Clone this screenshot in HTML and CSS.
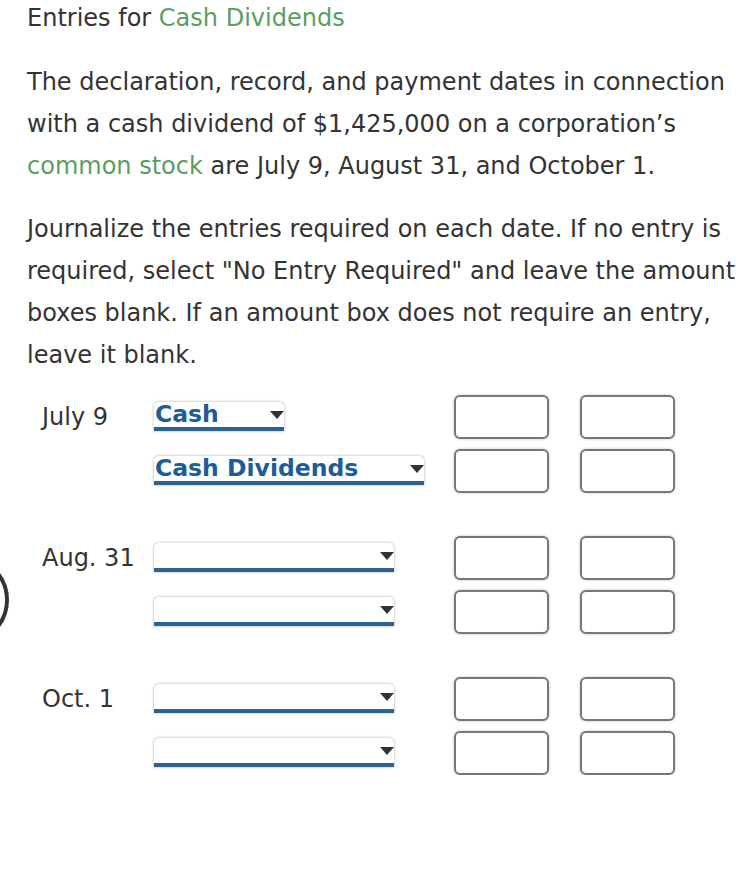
FILE: index.html
```html
<!DOCTYPE html>
<html>
<head>
<meta charset="utf-8">
<link rel="stylesheet" href="styles.css">
</head>
<body>
<div class="page">
  <div class="title">Entries for <span class="green">Cash Dividends</span></div>
  <p class="para p1">The declaration, record, and payment dates in connection with a cash dividend of $1,425,000 on a corporation’s <span class="green">common stock</span> are July 9, August 31, and October 1.</p>
  <p class="para p2">Journalize the entries required on each date. If no entry is required, select "No Entry Required" and leave the amount boxes blank. If an amount box does not require an entry, leave it blank.</p>

  <div class="journal">
    <div class="group">
      <div class="row">
        <div class="date">July 9</div>
        <div class="acct"><div class="sel w-cash"><span class="val">Cash</span><span class="arrow"></span></div></div>
        <div class="amt"></div>
        <div class="amt"></div>
      </div>
      <div class="row">
        <div class="date"></div>
        <div class="acct"><div class="sel w-div"><span class="val">Cash Dividends</span><span class="arrow"></span></div></div>
        <div class="amt"></div>
        <div class="amt"></div>
      </div>
    </div>
    <div class="group">
      <div class="row">
        <div class="date">Aug. 31</div>
        <div class="acct"><div class="sel w-empty"><span class="val"></span><span class="arrow"></span></div></div>
        <div class="amt"></div>
        <div class="amt"></div>
      </div>
      <div class="row">
        <div class="date"></div>
        <div class="acct"><div class="sel w-empty"><span class="val"></span><span class="arrow"></span></div></div>
        <div class="amt"></div>
        <div class="amt"></div>
      </div>
    </div>
    <div class="group">
      <div class="row">
        <div class="date">Oct. 1</div>
        <div class="acct"><div class="sel w-empty"><span class="val"></span><span class="arrow"></span></div></div>
        <div class="amt"></div>
        <div class="amt"></div>
      </div>
      <div class="row">
        <div class="date"></div>
        <div class="acct"><div class="sel w-empty"><span class="val"></span><span class="arrow"></span></div></div>
        <div class="amt"></div>
        <div class="amt"></div>
      </div>
    </div>
  </div>
  <div class="ring"></div>
</div>
</body>
</html>
```

FILE: styles.css
```css
html, body {
  margin: 0;
  padding: 0;
  background: #ffffff;
}
.page {
  position: relative;
  padding: 0 0 0 27px;
  font-family: "DejaVu Sans", Verdana, sans-serif;
  color: #333333;
  font-size: 24px;
}
.title {
  line-height: 36px;
  height: 36px;
}
.green {
  color: #5a9e62;
}
.para {
  margin: 0;
  line-height: 42px;
  width: 716px;
}
.p1 {
  margin-top: 25px;
}
.p2 {
  margin-top: 21px;
}
.journal {
  margin-top: 19px;
  display: flex;
  flex-direction: column;
  gap: 43px;
}
.group {
  display: flex;
  flex-direction: column;
  gap: 10px;
}
.row {
  display: grid;
  grid-template-columns: 112px 300px 95px 126px;
  margin-left: 15px;
  height: 44px;
  align-items: center;
}
.row .amt + .amt {
  margin-left: 31px;
}
.date {
  font-size: 24px;
}
.acct {
  align-self: start;
  padding-top: 7px;
}
.sel {
  position: relative;
  height: 25px;
  background: #ffffff;
  border-radius: 5px 5px 0 0;
  box-shadow: 0 0 3px rgba(0, 0, 0, 0.35);
  border-bottom: 4px solid #2d6391;
  box-sizing: content-box;
}
.w-cash { width: 130px; }
.w-div { width: 270px; }
.w-empty { width: 240px; }
.val {
  display: block;
  font-weight: bold;
  color: #1c5c98;
  font-size: 23.5px;
  line-height: 24px;
  padding-left: 1px;
  white-space: nowrap;
}
.arrow {
  position: absolute;
  right: 0;
  top: 9px;
  width: 0;
  height: 0;
  border-left: 7px solid transparent;
  border-right: 7px solid transparent;
  border-top: 8px solid #333333;
}
.amt {
  width: 91px;
  height: 40px;
  border: 2px solid #777777;
  border-radius: 6px;
  box-shadow: 0 0 3px rgba(0, 0, 0, 0.25);
  background: #ffffff;
}
.ring {
  position: absolute;
  left: -81px;
  top: 555px;
  width: 82px;
  height: 82px;
  border: 4px solid #333333;
  border-radius: 50%;
}
```
